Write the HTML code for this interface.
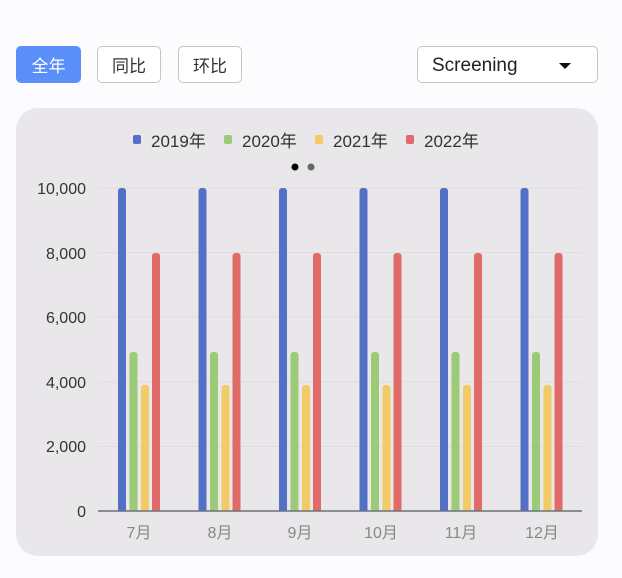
<!DOCTYPE html>
<html><head><meta charset="utf-8"><style>
body{margin:0;width:622px;height:578px;background:#fcfbfd;font-family:"Liberation Sans","Noto Sans CJK SC",sans-serif;position:relative;overflow:hidden}
.b{position:absolute;top:46px;height:37px;box-sizing:border-box;border:1.5px solid #c4c4c4;border-radius:5px;background:#fff;font-size:17px;color:#333;display:flex;align-items:center;justify-content:center}
.card{position:absolute;left:16px;top:108px;width:582px;height:448px;background:#e9e7ea;border-radius:22px}
</style></head><body>
<div class="b" style="left:16px;width:65px;background:#5a8ef8;border-color:#5a8ef8;color:#fff">全年</div>
<div class="b" style="left:97px;width:64px">同比</div>
<div class="b" style="left:178px;width:64px">环比</div>
<div class="b" style="left:417px;width:181px;justify-content:flex-start;padding-left:14px;padding-top:3px;font-size:19px;color:#222">Screening<span style="position:absolute;left:141px;top:16px;width:0;height:0;border-left:6px solid transparent;border-right:6px solid transparent;border-top:6px solid #111"></span></div>
<div class="card"></div>
<svg width="622" height="578" style="position:absolute;left:0;top:0" font-family="Liberation Sans, Noto Sans CJK SC, sans-serif">
<g font-size="17" fill="#333">
<rect x="133" y="135" width="8" height="9" rx="2" fill="#5470c6"/><text x="151" y="147">2019年</text>
<rect x="224" y="135" width="8" height="9" rx="2" fill="#9bcb77"/><text x="242" y="147">2020年</text>
<rect x="315" y="135" width="8" height="9" rx="2" fill="#f2ca66"/><text x="333" y="147">2021年</text>
<rect x="406" y="135" width="8" height="9" rx="2" fill="#e06b68"/><text x="424" y="147">2022年</text>
</g>
<circle cx="295" cy="167" r="3.5" fill="#000"/><circle cx="311" cy="167" r="3.5" fill="#666"/>
<g stroke="#dedcde" stroke-width="1">
<line x1="98" x2="582" y1="188" y2="188"/><line x1="98" x2="582" y1="252.5" y2="252.5"/><line x1="98" x2="582" y1="317" y2="317"/><line x1="98" x2="582" y1="382" y2="382"/><line x1="98" x2="582" y1="446.5" y2="446.5"/>
</g>
<g font-size="16" fill="#333" text-anchor="end">
<text x="86" y="194">10,000</text><text x="86" y="259">8,000</text><text x="86" y="323">6,000</text><text x="86" y="388">4,000</text><text x="86" y="452">2,000</text><text x="86" y="517">0</text>
</g>
<g id="g0">
<rect x="118" y="188" width="8" height="330" rx="3" fill="#5470c6"/>
<rect x="129.5" y="352" width="8" height="166" rx="3" fill="#9bcb77"/>
<rect x="141" y="385" width="8" height="133" rx="3" fill="#f2ca66"/>
<rect x="152" y="253" width="8" height="265" rx="3" fill="#e06b68"/>
</g>
<use href="#g0" x="80.5"/><use href="#g0" x="161"/><use href="#g0" x="241.5"/><use href="#g0" x="322"/><use href="#g0" x="402.5"/>
<rect x="98" y="511" width="484" height="10" fill="#e9e7ea"/>
<line x1="98" x2="582" y1="511" y2="511" stroke="#6e7079" stroke-width="1.5"/>
<g font-size="16" fill="#888" text-anchor="middle">
<text x="139" y="538">7月</text><text x="220" y="538">8月</text><text x="300" y="538">9月</text><text x="381" y="538">10月</text><text x="461" y="538">11月</text><text x="542" y="538">12月</text>
</g>
</svg>
</body></html>
